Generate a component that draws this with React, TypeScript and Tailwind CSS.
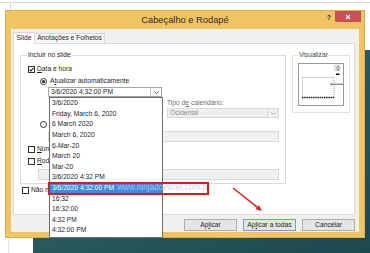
import React from 'react';

const dateFormats = [
    '3/6/2020',
    'Friday, March 6, 2020',
    '6 March 2020',
    'March 6, 2020',
    '6-Mar-20',
    'March 20',
    'Mar-20',
    '3/6/2020 4:32 PM',
    '3/6/2020 4:32:00 PM',
    '16:32',
    '16:32:00',
    '4:32 PM',
    '4:32:00 PM',
];
const selectedIndex = 8;

function Checkbox({ checked = false }: { checked?: boolean }) {
    return (
        <span className="flex h-[7px] w-[7px] shrink-0 items-center justify-center border border-[#333] bg-white">
            {checked && (
                <svg width="5" height="5" viewBox="0 0 5 5">
                    <path d="M0.5 2.6 L1.9 4 L4.5 0.8" fill="none" stroke="#222" strokeWidth="1.1" />
                </svg>
            )}
        </span>
    );
}

function Radio({ checked = false }: { checked?: boolean }) {
    return (
        <span className="flex h-[7px] w-[7px] shrink-0 items-center justify-center rounded-full border border-[#333] bg-white">
            {checked && <span className="h-[3px] w-[3px] rounded-full bg-[#222]" />}
        </span>
    );
}

function Chevron({ color }: { color: string }) {
    return (
        <svg width="5" height="3" viewBox="0 0 5 3">
            <path d="M0.3 0.3 L2.5 2.5 L4.7 0.3" fill="none" stroke={color} strokeWidth="0.9" />
        </svg>
    );
}

function Combo({ value, disabled = false, className }: { value: string; disabled?: boolean; className: string }) {
    return (
        <div
            className={
                disabled
                    ? `flex items-center border border-[#d9d9d9] bg-[#efefef] text-[#8d8d8d] ${className}`
                    : `flex items-center border border-[#a5a5a5] bg-white text-[#1e1e1e] ${className}`
            }
        >
            <span className="flex-1 truncate pl-[2px]">{value}</span>
            <span
                className={
                    disabled
                        ? 'flex h-full w-[11px] items-center justify-center border-l border-[#dcdcdc]'
                        : 'flex h-full w-[11px] items-center justify-center border-l border-[#c8c8c8]'
                }
            >
                <Chevron color={disabled ? '#a8a8a8' : '#444'} />
            </span>
        </div>
    );
}

function PreviewThumb() {
    return (
        <svg width="46" height="43" viewBox="0 0 46 43">
            <rect x="0.5" y="0.5" width="45" height="42" fill="white" stroke="#9a9a9a" />
            <rect x="37" y="2" width="5" height="5.5" fill="white" stroke="#999" strokeWidth="0.5" />
            <text x="38.2" y="6.8" fontSize="5.5" fontFamily="Liberation Sans, Arial, sans-serif" fill="#222">0</text>
            <rect x="38" y="10.5" width="3.5" height="1.6" fill="#111" />
            <line x1="33" y1="21.3" x2="45" y2="21.3" stroke="#8a8a8a" strokeWidth="1.4" />
            <path d="M31.5 21.3 L34 19.8 L34 22.8 Z" fill="#8a8a8a" />
            <rect x="4.5" y="14.5" width="31.5" height="20" fill="none" stroke="#7a7a7a" strokeWidth="0.7" strokeDasharray="1 1" />
            <line x1="4" y1="34.5" x2="36.5" y2="34.5" stroke="#222" strokeWidth="1.3" strokeDasharray="1.4 0.8" />
        </svg>
    );
}

export default function App() {
    return (
        <div className="relative h-[253px] w-[370px] overflow-hidden bg-white font-['Liberation_Sans',Arial,sans-serif] text-[6.7px] text-[#1e1e1e]">
            {/* app behind the dialog */}
            <div className="absolute left-0 right-0 top-[2px] h-px bg-[#d9d9d9]" />
            <div className="absolute left-[10px] top-[2px] h-[10px] w-px bg-[#d9d9d9]" />
            <div className="absolute left-[8px] top-[238px] h-[15px] w-px bg-[#e3e3e3]" />
            <div className="absolute bottom-0 left-[33px] right-0 top-[50px] bg-gradient-to-br from-[#1f4c55] via-[#27595d] to-[#1c4850]" />

            {/* dialog window */}
            <div className="absolute left-[5px] top-[10px] flex h-[228px] w-[360px] flex-col border border-[#dcae4e] bg-[#f1c462]">
                {/* title bar */}
                <div className="grid h-[18px] grid-cols-[1fr_auto_1fr] px-[3px]">
                    <div />
                    <div className="flex items-center pt-[2px] text-[9.3px] leading-none text-[#2a2a2a]">Cabeçalho e Rodapé</div>
                    <div className="flex items-start justify-end gap-[4px]">
                        <span className="mt-[3px] text-[7px] font-bold leading-none text-[#333]">?</span>
                        <span className="flex h-[11px] w-[26px] items-center justify-center bg-[#c9514f]">
                            <svg width="6" height="6" viewBox="0 0 6 6">
                                <path d="M1 1 L5 5 M5 1 L1 5" stroke="white" strokeWidth="1.2" />
                            </svg>
                        </span>
                    </div>
                </div>

                {/* client area */}
                <div className="mx-[5px] mb-[5px] flex flex-1 flex-col bg-[#f0f0f0] pl-[2px] pr-[4px] pt-[3px]">
                    {/* tabs */}
                    <div className="flex h-[11px] items-end">
                        <div className="relative z-10 -mb-px flex h-[12px] w-[22px] items-center justify-center border border-b-0 border-[#d9d9d9] bg-white">
                            Slide
                        </div>
                        <div className="flex h-[10px] w-[70px] items-center justify-center border border-b-0 border-l-0 border-[#d9d9d9] bg-[#f7f7f7]">
                            Anotações e Folhetos
                        </div>
                    </div>

                    {/* tab panel */}
                    <div className="flex h-[172px] flex-col border border-[#d9d9d9] bg-white pl-[6px] pt-[11px]">
                        <div className="flex items-start gap-[6px]">
                            {/* Incluir no slide */}
                            <div className="flex h-[129px] w-[266px] flex-col border border-[#dcdcdc] pl-[7px]">
                                <div className="-ml-[1px] -mt-[5px] w-fit bg-white px-[1px] leading-[8px]">Incluir no slide</div>

                                <div className="mt-[6px] flex h-[8px] items-center gap-[2px]">
                                    <Checkbox checked />
                                    <span>
                                        <span className="underline">D</span>ata e hora
                                    </span>
                                </div>

                                <div className="ml-[12px] mt-[4px] flex h-[8px] items-center gap-[3px]">
                                    <Radio checked />
                                    <span>
                                        A<span className="underline">t</span>ualizar automaticamente
                                    </span>
                                </div>

                                <div className="ml-[20px] mt-[2px] flex items-start gap-[5px]">
                                    <Combo value="3/6/2020 4:32:00 PM" className="h-[10px] w-[114px]" />
                                    <div className="mt-[12px] flex flex-col">
                                        <span className="leading-[8px] text-[#6e6e6e]">
                                            Tipo d<span className="underline">e</span> calendário:
                                        </span>
                                        <Combo value="Ocidental" disabled className="mt-[1px] h-[10px] w-[112px]" />
                                    </div>
                                </div>

                                <div className="ml-[12px] mt-[2px] flex h-[8px] items-center gap-[3px]">
                                    <Radio />
                                    <span>Fixa</span>
                                </div>

                                <div className="ml-[20px] mt-[3px] h-[11px] w-[231px] border border-[#d9d9d9] bg-[#f0f0f0]" />

                                <div className="mt-[3px] flex h-[8px] items-center gap-[2px]">
                                    <Checkbox />
                                    <span>
                                        <span className="underline">N</span>úmero do slide
                                    </span>
                                </div>

                                <div className="mt-[4px] flex h-[8px] items-center gap-[2px]">
                                    <Checkbox />
                                    <span>
                                        <span className="underline">R</span>odapé
                                    </span>
                                </div>

                                <div className="ml-[10px] mt-[4px] h-[11px] w-[241px] border border-[#d9d9d9] bg-[#f0f0f0]" />
                            </div>

                            {/* Visualizar */}
                            <div className="flex h-[58px] w-[58px] flex-col border border-[#e3e3e3] pl-[5px]">
                                <div className="-mt-[5px] w-fit bg-white px-[1px] leading-[8px] text-[#444]">Visualizar</div>
                                <div className="mt-[4px]">
                                    <PreviewThumb />
                                </div>
                            </div>
                        </div>

                        <div className="ml-[2px] mt-[2px] flex h-[8px] items-center gap-[2px]">
                            <Checkbox />
                            <span>Não mostrar no slide de título</span>
                        </div>
                    </div>

                    {/* buttons */}
                    <div className="mt-[4px] flex h-[12px] justify-end gap-[6px]">
                        <button className="flex w-[53px] items-center justify-center border border-[#adadad] bg-[#e5e5e5]">
                            Ap<span className="underline">l</span>icar
                        </button>
                        <button className="flex w-[53px] items-center justify-center border border-[#5fa3e6] bg-[#e5e5e5]">
                            Ap<span className="underline">l</span>icar a todas
                        </button>
                        <button className="flex w-[53px] items-center justify-center border border-[#adadad] bg-[#e5e5e5]">
                            Cancelar
                        </button>
                    </div>
                </div>
            </div>

            {/* open dropdown list, drawn over the dialog */}
            <div className="absolute left-[49px] top-[97px] flex w-[114px] flex-col border border-[#6e6e6e] bg-white pb-[1px]">
                {dateFormats.map((f, i) =>
                    i === selectedIndex ? (
                        <div key={f} className="flex h-[10.6px] items-center whitespace-nowrap bg-[#3b8ee2] pl-[2px] text-white">
                            <span>{f}</span>
                            <span className="ml-[3px] text-[8.2px] text-[rgba(196,202,218,0.85)]">www.ninjadoexcel.com.br</span>
                        </div>
                    ) : (
                        <div key={f} className="flex h-[10.6px] items-center whitespace-nowrap pl-[2px]">
                            {f}
                        </div>
                    )
                )}
            </div>

            {/* red highlight box */}
            <div className="absolute left-[48px] top-[182px] h-[13px] w-[161px] border-2 border-[#e3181c]" />

            {/* red arrow */}
            <svg className="absolute left-[228px] top-[184px]" width="40" height="32" viewBox="0 0 40 32">
                <line x1="5" y1="4" x2="29.5" y2="23.4" stroke="#e3181c" strokeWidth="1.4" />
                <path d="M34 27 L27.6 25.3 L30.9 21.2 Z" fill="#e3181c" />
            </svg>
        </div>
    );
}
